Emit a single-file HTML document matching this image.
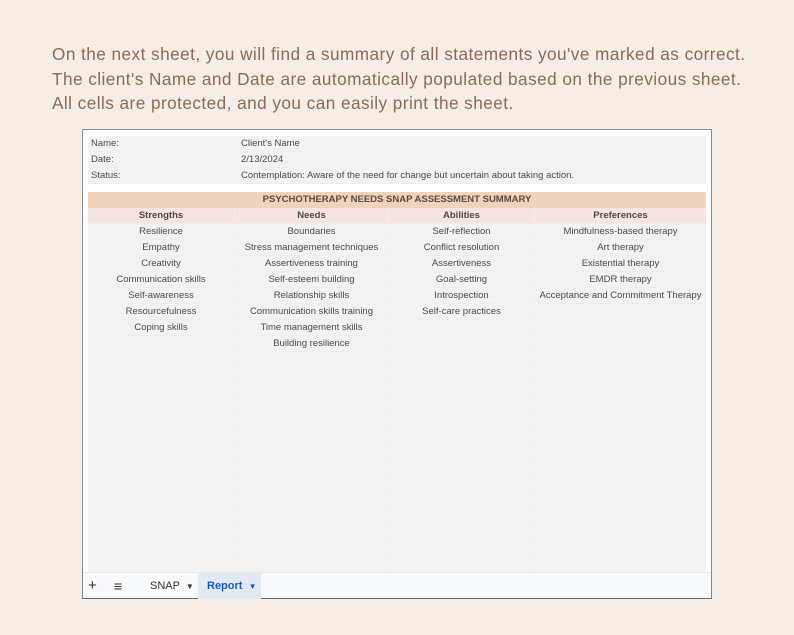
<!DOCTYPE html>
<html><head><meta charset="utf-8"><style>
*{margin:0;padding:0;box-sizing:border-box}
body{width:794px;height:635px;background:#f5ede6;font-family:"Liberation Sans","DejaVu Sans",sans-serif;position:relative;overflow:hidden}
.intro{position:absolute;left:52px;top:42px;color:#8c6a55;font-size:17.2px;line-height:24.5px;letter-spacing:0.45px}
.frame{position:absolute;left:82px;top:129px;width:630px;height:470px;background:#fff;border:1px solid #8a8a8a;border-bottom:2px solid #666}
.sheet{position:absolute;left:5px;top:6px;width:618px;font-family:"Liberation Sans","DejaVu Sans",sans-serif;font-size:9.5px;color:#4a4a4a}
.row{height:16px;line-height:16px;display:flex;background:#f2f2f2;border-bottom:1px solid #eeeeee;white-space:nowrap}
.info .c1{width:150px;padding-left:3px}
.info .c2{padding-left:3px}
.gap{height:8px;background:#fff}
.title{background:#f0d3bc;text-align:center;font-weight:bold;color:#5a4a40;height:16px;line-height:16px}
.hdr{background:#f7e3e0;font-weight:bold}
.row .a{width:147px;text-align:center;border-right:1px solid #efefef}
.row .b{width:154px;text-align:center;border-right:1px solid #efefef}
.row .c{width:146px;text-align:center;border-right:1px solid #efefef}
.row .d{width:171px;text-align:center}
.tabs{position:absolute;left:0;top:442px;width:628px;height:26px;background:#f8f9fa;border-top:1px solid #e8e8e8;font-size:11px;color:#333}
.tabs span{position:absolute;top:0;line-height:26px}
</style></head><body>
<div class="intro">On the next sheet, you will find a summary of all statements you've marked as correct.<br>The client's Name and Date are automatically populated based on the previous sheet.<br>All cells are protected, and you can easily print the sheet.</div>
<div class="frame">
<div class="sheet">
<div class="row info"><div class="c1">Name:</div><div class="c2">Client's Name</div></div>
<div class="row info"><div class="c1">Date:</div><div class="c2">2/13/2024</div></div>
<div class="row info"><div class="c1">Status:</div><div class="c2">Contemplation: Aware of the need for change but uncertain about taking action.</div></div>
<div class="gap"></div>
<div class="title">PSYCHOTHERAPY NEEDS SNAP ASSESSMENT SUMMARY</div>
<div class="row hdr"><div class="a">Strengths</div><div class="b">Needs</div><div class="c">Abilities</div><div class="d">Preferences</div></div>
<div class="row"><div class="a">Resilience</div><div class="b">Boundaries</div><div class="c">Self-reflection</div><div class="d">Mindfulness-based therapy</div></div>
<div class="row"><div class="a">Empathy</div><div class="b">Stress management techniques</div><div class="c">Conflict resolution</div><div class="d">Art therapy</div></div>
<div class="row"><div class="a">Creativity</div><div class="b">Assertiveness training</div><div class="c">Assertiveness</div><div class="d">Existential therapy</div></div>
<div class="row"><div class="a">Communication skills</div><div class="b">Self-esteem building</div><div class="c">Goal-setting</div><div class="d">EMDR therapy</div></div>
<div class="row"><div class="a">Self-awareness</div><div class="b">Relationship skills</div><div class="c">Introspection</div><div class="d">Acceptance and Commitment Therapy</div></div>
<div class="row"><div class="a">Resourcefulness</div><div class="b">Communication skills training</div><div class="c">Self-care practices</div><div class="d"></div></div>
<div class="row"><div class="a">Coping skills</div><div class="b">Time management skills</div><div class="c"></div><div class="d"></div></div>
<div class="row"><div class="a"></div><div class="b">Building resilience</div><div class="c"></div><div class="d"></div></div>
<div class="row"><div class="a"></div><div class="b"></div><div class="c"></div><div class="d"></div></div>
<div class="row"><div class="a"></div><div class="b"></div><div class="c"></div><div class="d"></div></div>
<div class="row"><div class="a"></div><div class="b"></div><div class="c"></div><div class="d"></div></div>
<div class="row"><div class="a"></div><div class="b"></div><div class="c"></div><div class="d"></div></div>
<div class="row"><div class="a"></div><div class="b"></div><div class="c"></div><div class="d"></div></div>
<div class="row"><div class="a"></div><div class="b"></div><div class="c"></div><div class="d"></div></div>
<div class="row"><div class="a"></div><div class="b"></div><div class="c"></div><div class="d"></div></div>
<div class="row"><div class="a"></div><div class="b"></div><div class="c"></div><div class="d"></div></div>
<div class="row"><div class="a"></div><div class="b"></div><div class="c"></div><div class="d"></div></div>
<div class="row"><div class="a"></div><div class="b"></div><div class="c"></div><div class="d"></div></div>
<div class="row"><div class="a"></div><div class="b"></div><div class="c"></div><div class="d"></div></div>
<div class="row"><div class="a"></div><div class="b"></div><div class="c"></div><div class="d"></div></div>
<div class="row"><div class="a"></div><div class="b"></div><div class="c"></div><div class="d"></div></div>
<div class="row" style="height:19px"><div class="a"></div><div class="b"></div><div class="c"></div><div class="d"></div></div>
</div>
<div class="tabs">
<span style="left:5px;font-size:15px">+</span>
<span style="left:31px;font-size:14px">&#8801;</span>
<span style="left:67px">SNAP &nbsp;<small style="font-size:8px">&#9660;</small></span>
<span style="left:115px;width:63px;height:26px;background:#e1e9f5;color:#1a57c4;font-weight:bold;padding-left:9px">Report &nbsp;<small style="font-size:8px">&#9660;</small></span>
</div>
</div>
</body></html>
